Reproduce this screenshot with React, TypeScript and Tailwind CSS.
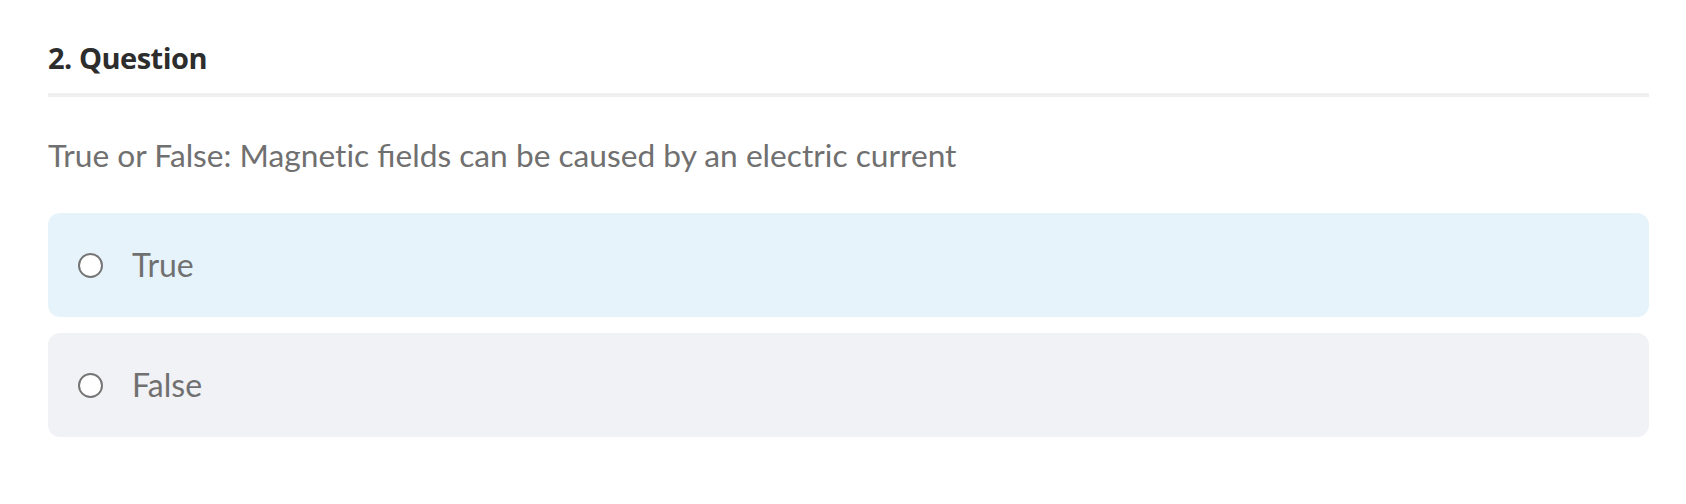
export default function App() {
  const options = [
    { label: "True", bg: "bg-[#e6f3fb]" },
    { label: "False", bg: "bg-[#f0f2f5]" },
  ];
  return (
    <div className="min-h-screen w-full bg-white pl-[48px] pr-[37px] pt-[36px] font-['Lato',sans-serif]">
      <h2 className="text-[29px] font-bold leading-[44px] text-[#2d2d2d] font-['Open_Sans',sans-serif] tracking-[-0.5px]">
        2. Question
      </h2>
      <div className="mt-[13px] h-[4px] w-full bg-[#f0f0f0]" />
      <p className="mt-[36px] text-[31.7px] leading-[44px] text-[#707070]">
        True or False: <span className="[font-variant-ligatures:none]">Magnetic</span> fields can be caused by an electric current
      </p>
      <div className="mt-[36px] flex flex-col gap-[16px]">
        {options.map((o) => (
          <div
            key={o.label}
            className={`flex h-[104px] items-center rounded-[12px] ${o.bg} pl-[30px]`}
          >
            <span className="h-[25px] w-[25px] rounded-full border-2 border-[#757575] bg-white" />
            <span className="ml-[29px] text-[32px] text-[#707070]">{o.label}</span>
          </div>
        ))}
      </div>
    </div>
  );
}
